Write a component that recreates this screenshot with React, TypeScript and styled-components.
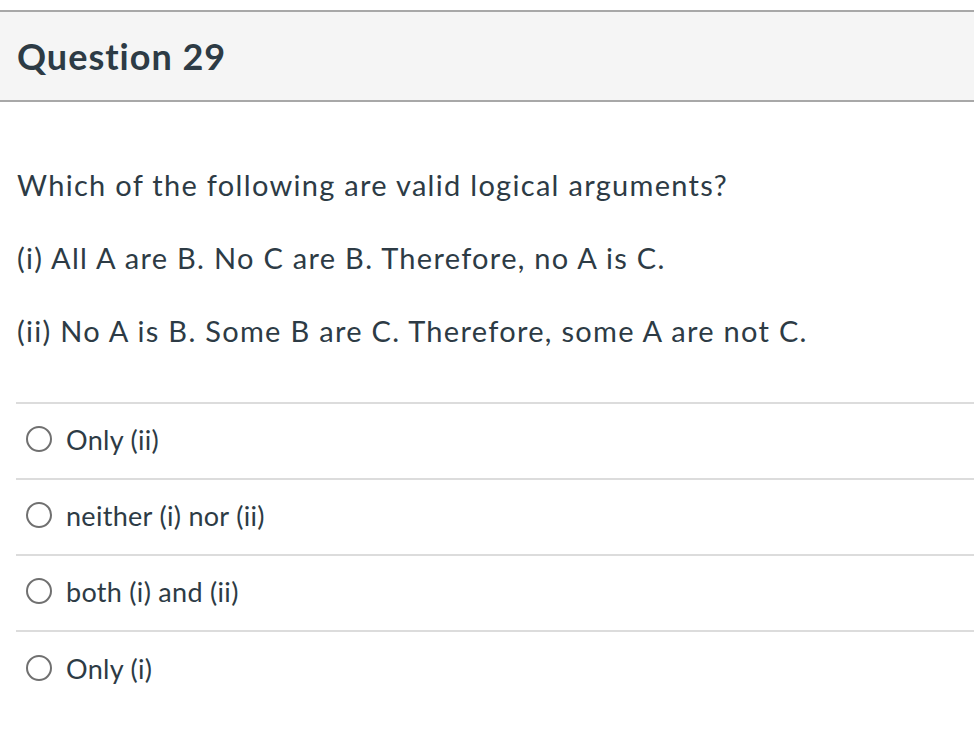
import styled, { createGlobalStyle } from 'styled-components';

const Global = createGlobalStyle`
  html, body {
    margin: 0;
    padding: 0;
    background: #fff;
  }
  body {
    font-family: Lato, "Open Sans", "Liberation Sans", sans-serif;
    color: #2d3b45;
  }
`;

const Page = styled.div`
  width: 974px;
  padding-top: 10px;
`;

const Header = styled.div`
  background: #f5f5f5;
  border-top: 2px solid #a8a8a8;
  border-bottom: 2px solid #a8a8a8;
  height: 88px;
  display: flex;
  align-items: center;
  padding-left: 17px;
`;

const Title = styled.h2`
  margin: 0;
  font-size: 36px;
  letter-spacing: 1px;
  font-weight: 700;
  color: #2d3b45;
`;

const Body = styled.div`
  padding: 63px 0 0 17px;
`;

const Para = styled.p`
  margin: 0 0 33px;
  font-size: 29px;
  letter-spacing: 1.3px;
  line-height: 40px;
`;

const Answers = styled.div`
  margin-top: 51px;
  margin-left: -1px;
  border-top: 2px solid #dcdcdc;
`;

const Answer = styled.label<{ $last?: boolean }>`
  display: flex;
  align-items: center;
  height: 76px;
  box-sizing: border-box;
  padding: 0 0 4px 10px;
  border-bottom: ${(p) => (p.$last ? 'none' : '2px solid #dcdcdc')};
  font-size: 27px;
  letter-spacing: 0.3px;
  gap: 14px;
`;

const Radio = styled.span`
  width: 22px;
  height: 22px;
  border-radius: 50%;
  border: 2px solid #707070;
  background: #fff;
  flex: none;
`;

const options = ['Only (ii)', 'neither (i) nor (ii)', 'both (i) and (ii)', 'Only (i)'];

export default function App() {
  return (
    <Page>
      <Global />
      <Header>
        <Title>Question 29</Title>
      </Header>
      <Body>
        <Para>Which of the following are valid logical arguments?</Para>
        <Para>(i) All A are B. No C are B. Therefore, no A is C.</Para>
        <Para>(ii) No A is B. Some B are C. Therefore, some A are not C.</Para>
        <Answers>
          {options.map((o, i) => (
            <Answer key={o} $last={i === options.length - 1}>
              <Radio />
              {o}
            </Answer>
          ))}
        </Answers>
      </Body>
    </Page>
  );
}
